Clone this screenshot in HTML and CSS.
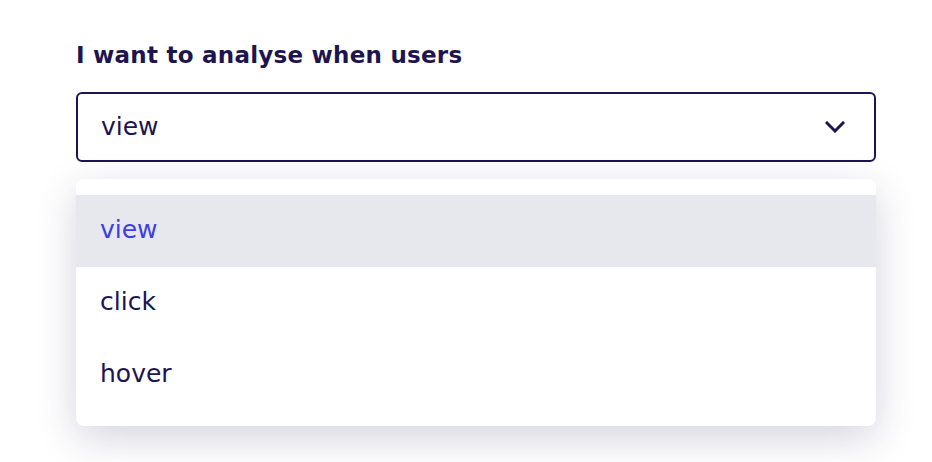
FILE: index.html
```html
<!DOCTYPE html>
<html lang="en">
<head>
<meta charset="utf-8">
<link rel="stylesheet" href="styles.css">
</head>
<body>
<div class="field">
  <label class="label">I want to analyse when users</label>
  <div class="select">
    <span class="select-value">view</span>
    <svg class="chevron" width="20" height="12" viewBox="0 0 20 12"><path d="M2 2 L10 10 L18 2" fill="none" stroke="#1e1450" stroke-width="3" stroke-linecap="square"/></svg>
  </div>
  <ul class="menu">
    <li class="option active">view</li>
    <li class="option">click</li>
    <li class="option">hover</li>
  </ul>
</div>
</body>
</html>
```
FILE: styles.css
```css
html, body { margin: 0; padding: 0; background: #ffffff; }
body {
  font-family: "DejaVu Sans", "Noto Sans", sans-serif;
  color: #1e1450;
  width: 932px;
  height: 462px;
  overflow: hidden;
}
.field {
  padding: 39px 56px 0 76px;
  display: flex;
  flex-direction: column;
}
.label {
  font-size: 23px;
  font-weight: 700;
  line-height: 32px;
  letter-spacing: 0.25px;
  color: #1e1450;
}
.select {
  margin-top: 21px;
  height: 70px;
  box-sizing: border-box;
  border: 2px solid #1e1450;
  border-radius: 6px;
  display: flex;
  align-items: center;
  justify-content: space-between;
  padding: 0 29px 2px 23px;
}
.select-value { font-size: 25px; color: #1e1450; }
.chevron { display: block; margin-top: 2px; }
.menu {
  list-style: none;
  margin: 17px 0 0 0;
  padding: 16px 0 15px 0;
  background: #ffffff;
  border-radius: 8px;
  box-shadow: 0 12px 40px rgba(40, 40, 90, 0.2);
}
.option {
  height: 72px;
  box-sizing: border-box;
  display: flex;
  align-items: center;
  padding: 0 0 3px 24px;
  font-size: 25px;
  color: #1e1450;
}
.option.active {
  background: #e7e8ee;
  color: #3c3ee0;
}
```
